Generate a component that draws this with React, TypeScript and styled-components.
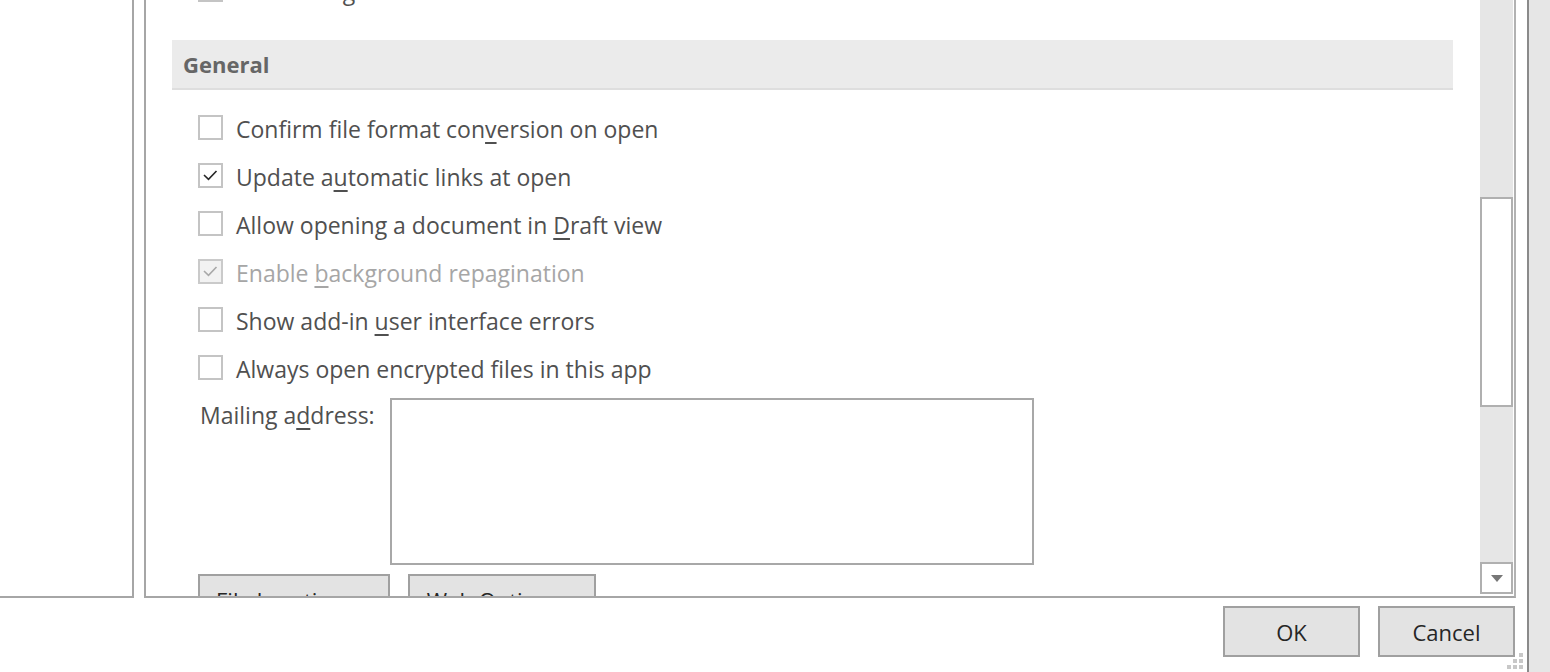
import React from "react";
import styled, { createGlobalStyle } from "styled-components";

const GlobalStyle = createGlobalStyle`
  html, body {
    margin: 0;
    padding: 0;
    background: #ffffff;
  }
  body {
    font-family: "Open Sans", "Noto Sans", "Liberation Sans", sans-serif;
  }
  * { box-sizing: border-box; }
`;

const Page = styled.div`
  width: 1550px;
  height: 672px;
  display: flex;
  overflow: hidden;
  background: #ffffff;
`;

const Main = styled.div`
  flex: 0 0 1527px;
  display: flex;
  flex-direction: column;
`;

const RightStrip = styled.div`
  flex: 1;
  border-left: 2px solid #8a8a8a;
  background: #e6e6e6;
`;

const Panes = styled.div`
  display: flex;
  height: 598px;
`;

const NavPane = styled.div`
  width: 134px;
  border-right: 2px solid #a6a6a6;
  border-bottom: 2px solid #a6a6a6;
  background: #ffffff;
`;

const ContentPane = styled.div`
  margin-left: 10px;
  width: 1372px;
  display: flex;
  border-left: 2px solid #a6a6a6;
  border-right: 2px solid #b2b2b2;
  border-bottom: 2px solid #a6a6a6;
  overflow: hidden;
  background: #ffffff;
`;

const ScrollArea = styled.div`
  flex: 1;
  overflow: hidden;
`;

const ScrollContent = styled.div`
  margin-top: -35px;
  padding: 0 27px 0 26px;
  display: flex;
  flex-direction: column;
`;

const Scrollbar = styled.div`
  width: 33px;
  margin-right: 1px;
  margin-bottom: 2px;
  background: #e6e6e6;
  display: flex;
  flex-direction: column;
`;

const ScrollThumb = styled.div`
  margin-top: 197px;
  height: 210px;
  border: 2px solid #b0b0b0;
  background: #ffffff;
`;

const ScrollSpacer = styled.div`
  flex: 1;
`;

const ScrollButton = styled.div`
  height: 32px;
  border: 2px solid #b0b0b0;
  background: #ffffff;
  display: flex;
  align-items: center;
  justify-content: center;
`;

const SectionHeader = styled.div`
  margin-top: 27px;
  height: 50px;
  padding-left: 11px;
  background: #ebebeb;
  border-bottom: 2px solid #dedede;
  display: flex;
  align-items: center;
  font-size: 22px;
  font-weight: 700;
  color: #666666;
`;

const OptionList = styled.div<{ $top: number }>`
  margin-top: ${(p) => p.$top}px;
  padding-left: 26px;
  display: flex;
  flex-direction: column;
`;

const OptionRow = styled.div`
  height: 48px;
  display: flex;
  align-items: center;
  gap: 13px;
`;

const CheckBox = styled.span<{ $disabled?: boolean }>`
  width: 25px;
  height: 25px;
  flex: 0 0 25px;
  border: 2px solid ${(p) => (p.$disabled ? "#cacaca" : "#c4c4c4")};
  background: ${(p) => (p.$disabled ? "#f2f2f2" : "#ffffff")};
  display: flex;
  align-items: center;
  justify-content: center;
`;

const OptionLabel = styled.span<{ $disabled?: boolean }>`
  padding-top: 3px;
  font-size: 23px;
  line-height: 32px;
  white-space: nowrap;
  color: ${(p) => (p.$disabled ? "#a6a6a6" : "#505050")};

  u {
    text-decoration: underline;
    text-decoration-thickness: 1.5px;
    text-underline-offset: 4px;
  }
`;

const AddressRow = styled.div`
  margin-top: 7px;
  padding-left: 28px;
  display: flex;
  align-items: flex-start;
`;

const AddressLabel = styled.label`
  width: 190px;
  padding-top: 1px;
  font-size: 23px;
  line-height: 32px;
  color: #505050;
  white-space: nowrap;

  u {
    text-decoration: underline;
    text-decoration-thickness: 1.5px;
    text-underline-offset: 4px;
  }
`;

const AddressBox = styled.textarea`
  width: 644px;
  height: 167px;
  border: 2px solid #a8a8a8;
  background: #ffffff;
  resize: none;
  outline: none;
  margin: 0;
  padding: 4px;
  font-family: inherit;
  font-size: 23px;
`;

const ActionRow = styled.div`
  margin-top: 9px;
  padding-left: 26px;
  display: flex;
  gap: 18px;
`;

const DialogButton = styled.button<{ $width: number }>`
  width: ${(p) => p.$width}px;
  height: 51px;
  flex: 0 0 auto;
  border: 2px solid #a0a0a0;
  background: #e3e3e3;
  color: #262626;
  font-family: inherit;
  font-size: 22px;
  padding: 0;
  margin: 0;
  display: flex;
  align-items: center;
  justify-content: center;
`;

const Footer = styled.div`
  position: relative;
  flex: 1;
  display: flex;
  justify-content: flex-end;
  align-items: flex-start;
  padding-top: 8px;
  padding-right: 12px;
  gap: 18px;
`;

const Grip = styled.svg`
  position: absolute;
  right: 4px;
  bottom: 3px;
`;

const Check: React.FC<{ color: string }> = ({ color }) => (
  <svg width="21" height="21" viewBox="0 0 21 21">
    <polyline
      points="4,10 8.5,14.3 16.5,6"
      fill="none"
      stroke={color}
      strokeWidth="1.6"
    />
  </svg>
);

type Option = {
  before: string;
  key: string;
  after: string;
  checked?: boolean;
  disabled?: boolean;
};

const options: Option[] = [
  { before: "Confirm file format con", key: "v", after: "ersion on open" },
  { before: "Update a", key: "u", after: "tomatic links at open", checked: true },
  { before: "Allow opening a document in ", key: "D", after: "raft view" },
  { before: "Enable ", key: "b", after: "ackground repagination", checked: true, disabled: true },
  { before: "Show add-in ", key: "u", after: "ser interface errors" },
  { before: "Always open encrypted files in this app", key: "", after: "" },
];

const OptionItem: React.FC<{ option: Option }> = ({ option }) => (
  <OptionRow>
    <CheckBox $disabled={option.disabled}>
      {option.checked && <Check color={option.disabled ? "#a8a8a8" : "#262626"} />}
    </CheckBox>
    <OptionLabel $disabled={option.disabled}>
      {option.before}
      {option.key && <u>{option.key}</u>}
      {option.after}
    </OptionLabel>
  </OptionRow>
);

export default function App() {
  return (
    <>
      <GlobalStyle />
      <Page>
        <Main>
          <Panes>
            <NavPane />
            <ContentPane>
              <ScrollArea>
                <ScrollContent>
                  <OptionList $top={0}>
                    <OptionItem
                      option={{ before: "Embed lin", key: "g", after: "uistic data" }}
                    />
                  </OptionList>
                  <SectionHeader>General</SectionHeader>
                  <OptionList $top={13}>
                    {options.map((o, i) => (
                      <OptionItem key={i} option={o} />
                    ))}
                  </OptionList>
                  <AddressRow>
                    <AddressLabel>
                      Mailing a<u>d</u>dress:
                    </AddressLabel>
                    <AddressBox readOnly value="" />
                  </AddressRow>
                  <ActionRow>
                    <DialogButton $width={192}>File Locations...</DialogButton>
                    <DialogButton $width={188}>Web Options...</DialogButton>
                  </ActionRow>
                </ScrollContent>
              </ScrollArea>
              <Scrollbar>
                <ScrollThumb />
                <ScrollSpacer />
                <ScrollButton>
                  <svg width="12" height="7" viewBox="0 0 12 7">
                    <polygon points="0,0 12,0 6,7" fill="#777777" />
                  </svg>
                </ScrollButton>
              </Scrollbar>
            </ContentPane>
          </Panes>
          <Footer>
            <DialogButton $width={137}>OK</DialogButton>
            <DialogButton $width={137}>Cancel</DialogButton>
            <Grip width="16" height="16" viewBox="0 0 16 16">
              <rect x="12" y="0" width="4" height="4" fill="#c8c8c8" />
              <rect x="6" y="6" width="4" height="4" fill="#c8c8c8" />
              <rect x="12" y="6" width="4" height="4" fill="#c8c8c8" />
              <rect x="0" y="12" width="4" height="4" fill="#c8c8c8" />
              <rect x="6" y="12" width="4" height="4" fill="#c8c8c8" />
              <rect x="12" y="12" width="4" height="4" fill="#c8c8c8" />
            </Grip>
          </Footer>
        </Main>
        <RightStrip />
      </Page>
    </>
  );
}
